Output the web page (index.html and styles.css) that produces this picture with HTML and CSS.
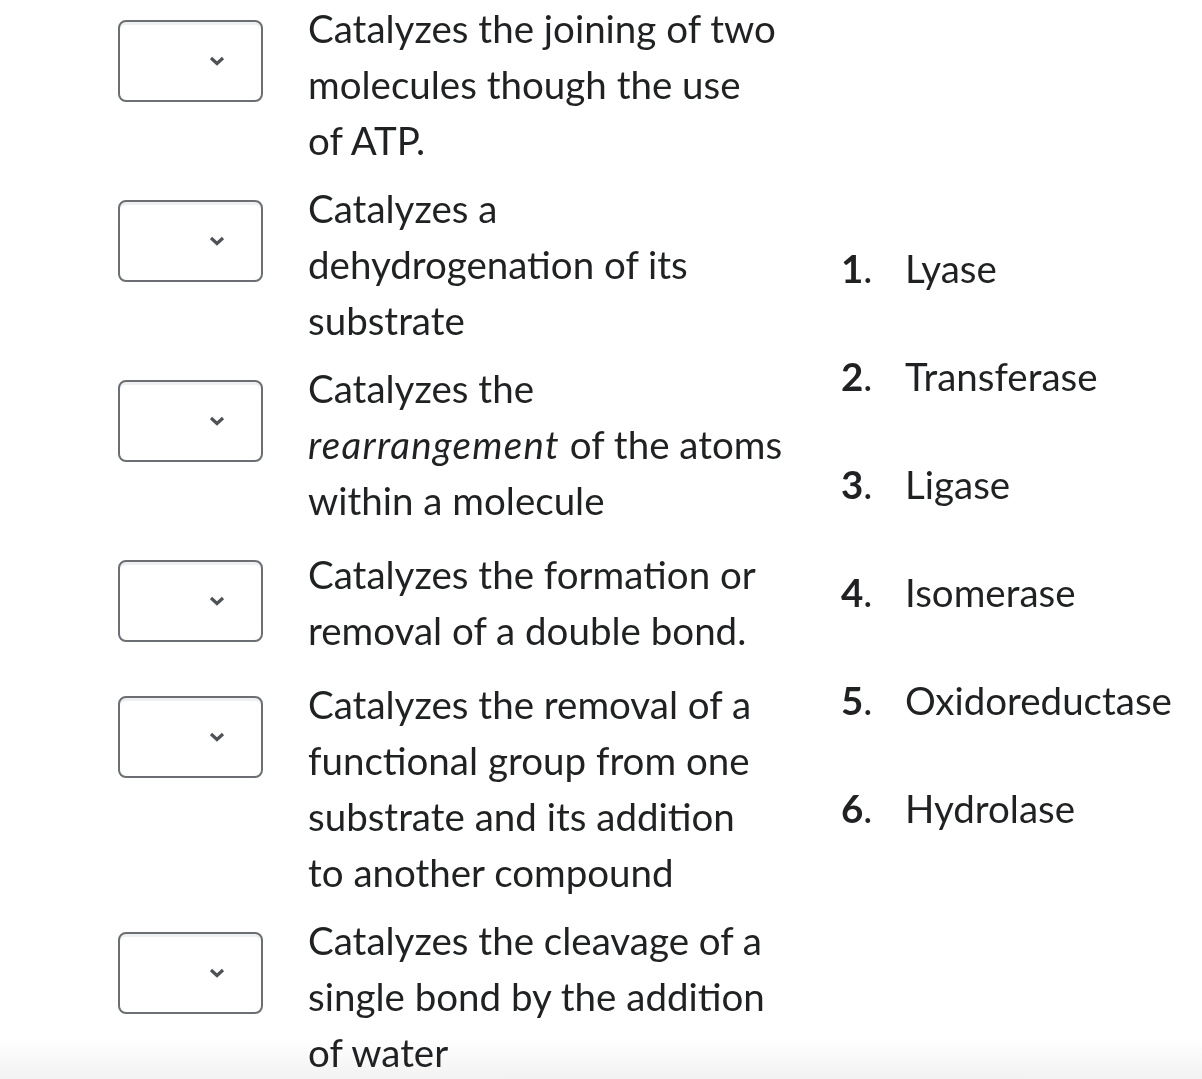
FILE: index.html
```html
<!DOCTYPE html>
<html>
<head>
<meta charset="utf-8">
<link rel="stylesheet" href="styles.css">
</head>
<body>
<div class="page">
  <div class="pairs">
    <div class="row">
      <div class="select"><svg class="chev" viewBox="0 0 16 10" width="16" height="10"><path d="M2 2 L8 7.5 L14 2" /></svg></div>
      <div class="desc">Catalyzes the joining of two<br>molecules though the use<br>of ATP.</div>
    </div>
    <div class="row">
      <div class="select"><svg class="chev" viewBox="0 0 16 10" width="16" height="10"><path d="M2 2 L8 7.5 L14 2" /></svg></div>
      <div class="desc">Catalyzes a<br>dehydrogenation of its<br>substrate</div>
    </div>
    <div class="row">
      <div class="select"><svg class="chev" viewBox="0 0 16 10" width="16" height="10"><path d="M2 2 L8 7.5 L14 2" /></svg></div>
      <div class="desc">Catalyzes the<br><em>rearrangement</em> of the atoms<br>within a molecule</div>
    </div>
    <div class="row">
      <div class="select"><svg class="chev" viewBox="0 0 16 10" width="16" height="10"><path d="M2 2 L8 7.5 L14 2" /></svg></div>
      <div class="desc">Catalyzes the formation or<br>removal of a double bond.</div>
    </div>
    <div class="row">
      <div class="select"><svg class="chev" viewBox="0 0 16 10" width="16" height="10"><path d="M2 2 L8 7.5 L14 2" /></svg></div>
      <div class="desc">Catalyzes the removal of a<br>functional group from one<br>substrate and its addition<br>to another compound</div>
    </div>
    <div class="row">
      <div class="select"><svg class="chev" viewBox="0 0 16 10" width="16" height="10"><path d="M2 2 L8 7.5 L14 2" /></svg></div>
      <div class="desc">Catalyzes the cleavage of a<br>single bond by the addition<br>of water</div>
    </div>
  </div>
  <ol class="answers">
    <li><span class="num"><b>1</b>.</span>Lyase</li>
    <li><span class="num"><b>2</b>.</span>Transferase</li>
    <li><span class="num"><b>3</b>.</span>Ligase</li>
    <li><span class="num"><b>4</b>.</span>Isomerase</li>
    <li><span class="num"><b>5</b>.</span>Oxidoreductase</li>
    <li><span class="num"><b>6</b>.</span>Hydrolase</li>
  </ol>
</div>
<div class="fade"></div>
</body>
</html>
```
FILE: styles.css
```css
html, body {
  margin: 0;
  padding: 0;
}
body {
  font-family: Lato, "Open Sans", sans-serif;
  color: #1f2123;
  font-size: 38.5px;
}
.page {
  display: grid;
  grid-template-columns: 672px auto;
  align-items: center;
  padding: 0 0 0 118px;
}
.pairs {
  display: flex;
  flex-direction: column;
  gap: 12px;
}
.row {
  display: flex;
  align-items: center;
  gap: 45px;
  min-height: 124px;
}
.select {
  flex: none;
  align-self: flex-start;
  margin-top: 20px;
  width: 145px;
  height: 82px;
  box-sizing: border-box;
  border: 2px solid #6b6f73;
  border-radius: 8px;
  background: #fff;
  box-shadow: inset 0 3px 0 #eef0f1;
  display: flex;
  align-items: center;
  justify-content: flex-end;
  padding-right: 36px;
}
.chev {
  flex: none;
  display: block;
}
.chev path {
  fill: none;
  stroke: #4f5357;
  stroke-width: 3.2;
  stroke-linecap: butt;
  stroke-linejoin: miter;
}
.desc {
  line-height: 56px;
  white-space: nowrap;
}
.desc em {
  font-style: italic;
  letter-spacing: 1.3px;
}
.answers {
  list-style: none;
  margin: 0 0 4px 0;
  padding: 0 0 0 51px;
}
.answers li {
  height: 108px;
  line-height: 108px;
  display: flex;
}
.num {
  width: 64px;
  flex: none;
}
.num b {
  font-weight: 700;
}
.fade {
  position: fixed;
  left: 0;
  right: 0;
  bottom: 0;
  height: 40px;
  background: linear-gradient(to bottom, rgba(242,242,242,0), #f2f2f2);
  z-index: -1;
}
```
